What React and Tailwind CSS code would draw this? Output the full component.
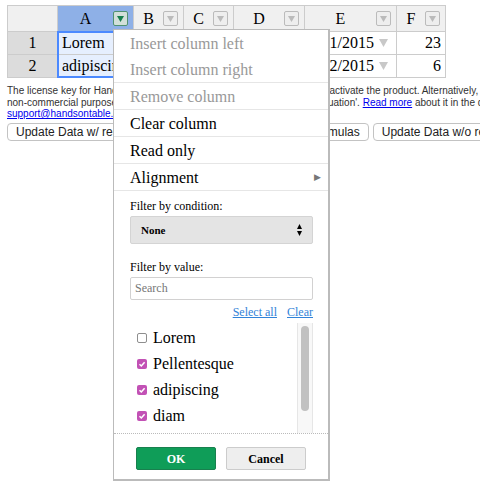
import React from "react";

function DropBtn({ filtered }) {
  return (
    <span
      className={
        filtered
          ? "w-[15px] h-[15px] mr-[5px] rounded-[2px] border border-[#509272] bg-[#d2e0d9] flex items-center justify-center shrink-0"
          : "w-[15px] h-[15px] mr-[5px] rounded-[2px] border border-[#bbb] bg-[#eee] flex items-center justify-center shrink-0"
      }
    >
      <svg width="7" height="6" viewBox="0 0 7 6">
        <path d="M0 0H7L3.5 6Z" fill={filtered ? "#18804e" : "#bbb"} />
      </svg>
    </span>
  );
}

function HeadCell({ label, w, active, filtered }) {
  return (
    <div
      className={
        (active ? "bg-[#8eb0e7] " : "bg-[#f0f0f0] ") +
        w +
        " h-[26px] border-r border-b border-[#ccc] flex items-center"
      }
    >
      <span className="flex-1 text-center text-[16px] leading-none">{label}</span>
      <DropBtn filtered={filtered} />
    </div>
  );
}

function Arrow() {
  return (
    <svg width="9" height="8" viewBox="0 0 9 8" className="ml-[5px] shrink-0">
      <path d="M0 0H9L4.5 8Z" fill="#c8c8c8" />
    </svg>
  );
}

function DataRow({ n, a, e, f }) {
  return (
    <div className="flex">
      <div className="w-[50px] h-[23px] bg-[#dcdcdc] border-r border-b border-[#ccc] flex items-center justify-center text-[16px]">
        {n}
      </div>
      <div className="w-[76px] h-[23px] bg-[#e6effe] border-r border-b border-[#ccc] flex items-center px-[4px] text-[16px] overflow-hidden whitespace-nowrap">
        {a}
      </div>
      <div className="w-[50px] h-[23px] bg-white border-r border-b border-[#ccc]" />
      <div className="w-[50px] h-[23px] bg-white border-r border-b border-[#ccc]" />
      <div className="w-[71px] h-[23px] bg-white border-r border-b border-[#ccc]" />
      <div className="w-[92px] h-[23px] bg-white border-r border-b border-[#ccc] flex items-center justify-end pr-[8px] text-[16px] whitespace-nowrap">
        <span>{e}</span>
        <Arrow />
      </div>
      <div className="w-[49px] h-[23px] bg-white border-r border-b border-[#ccc] flex items-center justify-end pr-[4px] text-[16px]">
        {f}
      </div>
    </div>
  );
}

function Item({ children, disabled, sub }) {
  return (
    <div
      className={
        (disabled ? "text-[#999] " : "text-black ") +
        "h-[26px] flex items-center justify-between pl-[16px] pr-[7px] pt-[2px] text-[16px] whitespace-nowrap"
      }
    >
      <span>{children}</span>
      {sub && <span className="text-[9px] text-[#777]">▶</span>}
    </div>
  );
}

function Sep() {
  return <div className="h-px bg-[#e6e6e6]" />;
}

function Check({ checked, label }) {
  return (
    <div className="h-[26px] flex items-center pl-[7px] gap-[6px] text-[16px]">
      {checked ? (
        <span className="w-[10px] h-[10px] rounded-[2px] bg-[#c251b5] flex items-center justify-center shrink-0">
          <svg width="10" height="10" viewBox="0 0 10 10">
            <path d="M2.5 5.2L4.3 7L7.6 3.2" stroke="white" strokeWidth="1.5" fill="none" />
          </svg>
        </span>
      ) : (
        <span className="w-[10px] h-[10px] rounded-[2px] bg-white border border-[#8e8e8e] shrink-0" />
      )}
      <span>{label}</span>
    </div>
  );
}

function Menu() {
  return (
    <div className="absolute left-[113px] top-[29px] w-[217px] h-[452px] bg-white border-l border-t border-r-2 border-b-2 border-[#bbb] font-['Liberation_Serif',serif]">
      <Item disabled>Insert column left</Item>
      <Item disabled>Insert column right</Item>
      <Sep />
      <Item disabled>Remove column</Item>
      <Sep />
      <Item>Clear column</Item>
      <Sep />
      <Item>Read only</Item>
      <Sep />
      <Item sub>Alignment</Item>
      <Sep />
      <div className="pl-[16px] pr-[15px] pt-[8px]">
        <div className="text-[12px] leading-[14px]">Filter by condition:</div>
        <div className="mt-[3px] h-[28px] flex items-center justify-between px-[10px] bg-[#e4e4e4] border border-[#d4d4d4] rounded-[2px]">
          <span className="text-[11px] font-bold">None</span>
          <svg width="5" height="12" viewBox="0 0 5 12">
            <path d="M0 5H5L2.5 0Z" fill="#000" />
            <path d="M0 7H5L2.5 12Z" fill="#000" />
          </svg>
        </div>
        <div className="mt-[16px] text-[12px] leading-[14px]">Filter by value:</div>
        <input
          className="mt-[3px] block w-full h-[23px] border border-[#d2d1d1] rounded-[2px] px-[4px] text-[12px] outline-none placeholder:text-[#777]"
          placeholder="Search"
          readOnly
        />
        <div className="mt-[5px] flex justify-end gap-[10px] text-[12px] leading-[14px]">
          <span className="text-[#3283d8] underline">Select all</span>
          <span className="text-[#3283d8] underline">Clear</span>
        </div>
        <div className="mt-[4px] h-[110px] flex">
          <div className="flex-1 pt-[2px] overflow-hidden">
            <Check label="Lorem" />
            <Check checked label="Pellentesque" />
            <Check checked label="adipiscing" />
            <Check checked label="diam" />
          </div>
          <div className="w-[16px] h-full bg-[#f8f8f8] border-l border-r border-[#e6e6e6] pt-[3px] flex justify-center">
            <div className="w-[8px] h-[85px] rounded-full bg-[#c1c1c1]" />
          </div>
        </div>
      </div>
      <div className="border-t border-dotted border-[#bbb] pt-[13px] flex justify-center gap-[10px]">
        <div className="w-[80px] h-[23px] rounded-[2px] bg-[#0f9d58] border border-[#18804e] text-white text-[12px] font-bold flex items-center justify-center">
          OK
        </div>
        <div className="w-[80px] h-[23px] rounded-[2px] bg-[#eee] border border-[#ccc] text-black text-[12px] font-bold flex items-center justify-center">
          Cancel
        </div>
      </div>
    </div>
  );
}

export default function App() {
  return (
    <div className="relative w-[480px] h-[500px] overflow-hidden bg-white">
      <div className="w-[760px]">
        <div className="pl-[7px] pt-[5px] font-['Liberation_Serif',serif] text-black">
          <div className="w-fit border-l border-t border-[#ccc]">
            <div className="flex">
              <div className="w-[50px] h-[26px] bg-[#f0f0f0] border-r border-b border-[#ccc]" />
              <HeadCell label="A" w="w-[76px]" active filtered />
              <HeadCell label="B" w="w-[50px]" />
              <HeadCell label="C" w="w-[50px]" />
              <HeadCell label="D" w="w-[71px]" />
              <HeadCell label="E" w="w-[92px]" />
              <HeadCell label="F" w="w-[49px]" />
            </div>
            <DataRow n="1" a="Lorem" e="01/01/2015" f="23" />
            <DataRow n="2" a="adipiscing" e="01/02/2015" f="6" />
          </div>
        </div>
        <div className="pl-[7px] pt-[7px] pb-[3px] text-[10px] leading-[11.5px] text-[#323232] font-['Liberation_Sans',Arial,sans-serif]">
          <div className="whitespace-nowrap">
            The license key for Handsontable is missing. Use your purchased key to activate the product. Alternatively, you can activate Handsontable to use for
          </div>
          <div className="whitespace-nowrap">
            non-commercial purposes by passing the key: 'non-commercial-and-evaluation'.{" "}
            <span className="text-[#0000ee] underline">Read more</span> about it in the documentation or contact us at
          </div>
          <div className="whitespace-nowrap">
            <span className="text-[#0000ee] underline">support@handsontable.com</span>.
          </div>
        </div>
        <div className="pl-[7px] flex gap-[4px] font-['Liberation_Sans',Arial,sans-serif] text-[12px] text-[#222]">
          <div className="h-[18px] px-[8px] rounded-[4px] border border-[#c3c3c3] bg-white flex items-center whitespace-nowrap">
            Update Data w/ reset
          </div>
          <div className="w-[227px] h-[18px] px-[8px] rounded-[4px] border border-[#c3c3c3] bg-white flex items-center justify-end whitespace-nowrap">
            Update Data w/ formulas
          </div>
          <div className="h-[18px] px-[8px] rounded-[4px] border border-[#c3c3c3] bg-white flex items-center whitespace-nowrap">
            Update Data w/o reset
          </div>
        </div>
      </div>
      <div className="absolute left-[57px] top-[31px] w-[77px] h-[47px] border-2 border-[#4b89ff]" />
      <Menu />
    </div>
  );
}
